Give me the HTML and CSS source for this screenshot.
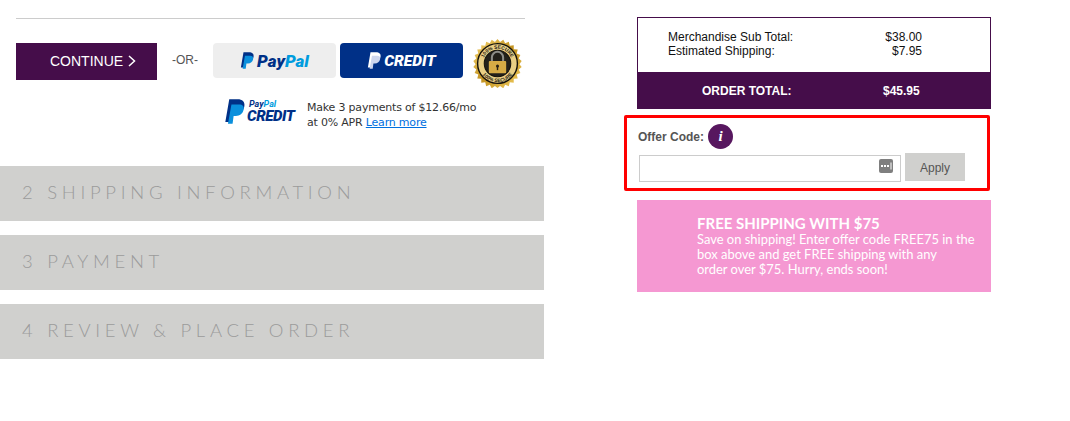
FILE: index.html
```html
<!DOCTYPE html>
<html lang="en">
<head>
<meta charset="utf-8">
<title>Checkout</title>
<link rel="stylesheet" href="styles.css">
</head>
<body>
<svg class="defs" width="0" height="0" aria-hidden="true">
  <defs>
    <symbol id="pp-back" viewBox="0 0 24 28"><path d="M6 0h9.500c5.500 0 8.500 3 7.800 7.600-.8 5.600-4.800 8.400-10 8.400H9.500L8 26H1.500z"/></symbol>
    <symbol id="pp-front" viewBox="0 0 24 28"><path d="M8.500 6h9c3.600 0 5.600 2 5 5.400-.8 5-4.500 7.600-9 7.600h-2.500L9.800 28H4.500z"/></symbol>
  </defs>
</svg>
<main class="page">
  <section class="left">
    <hr class="rule">
    <div class="actions">
      <button class="continue" type="button"><span>CONTINUE</span>
        <svg class="chevron" viewBox="0 0 8 12" width="8" height="12"><path d="M1 1l5.500 5L1 11" fill="none" stroke="#fff" stroke-width="1.500"/></svg>
      </button>
      <span class="or">-OR-</span>
      <div class="pay-stack">
        <div class="pay-row">
          <div class="pay-btn pay-btn-light">
            <svg class="pp-mark" width="14" height="17"><use href="#pp-back" class="fill-navy"/><use href="#pp-front" class="fill-sky"/></svg>
            <span class="pp-word"><span class="navy">Pay</span><span class="sky">Pal</span></span>
          </div>
          <div class="pay-btn pay-btn-dark">
            <svg class="pp-mark" width="14" height="17"><use href="#pp-back" class="fill-white"/><use href="#pp-front" class="fill-pale"/></svg>
            <span class="pp-credit">CREDIT</span>
          </div>
          <svg class="badge" viewBox="0 0 48 48" width="48" height="48">
            <defs>
              <linearGradient id="gold" x1="0" y1="0" x2="1" y2="1"><stop offset="0" stop-color="#f7d774"/><stop offset=".5" stop-color="#c2921f"/><stop offset="1" stop-color="#f3cf62"/></linearGradient>
              <path id="arc-top" d="M9.500 24a14.500 14.500 0 0 1 29 0"/>
              <path id="arc-bot" d="M5.800 24a18.200 18.200 0 0 0 36.400 0"/>
            </defs>
            <polygon fill="url(#gold)" points="24,0 26.500,3 29.700,.7 31.500,4.200 35.100,2.800 36,6.600 39.900,6.100 39.900,10 43.800,10.400 42.800,14.200 46.400,15.700 44.800,19.200 47.700,21.600 45.500,24.800 47.700,27.400 44.800,29.800 46.400,33.300 42.800,34.800 43.800,38.600 39.900,39 39.900,42.900 36,42.400 35.100,46.200 31.500,44.800 29.700,48.300 26.500,46 24,48 21.500,46 18.300,48.300 16.500,44.800 12.900,46.200 12,42.400 8.100,42.900 8.100,39 4.200,38.600 5.200,34.800 1.600,33.300 3.200,29.800 .3,27.400 2.500,24.800 .3,21.600 3.200,19.200 1.600,15.700 5.200,14.200 4.200,10.400 8.100,10 8.100,6.100 12,6.600 12.900,2.800 16.500,4.200 18.300,.7 21.500,3"/>
            <circle cx="24" cy="24" r="19.500" fill="#e9cf85" stroke="#16130c" stroke-width="1.400"/>
            <circle cx="24" cy="24" r="13" fill="#23211b" stroke="#16130c" stroke-width="1"/>
            <text class="badge-text"><textPath href="#arc-top" startOffset="50%" text-anchor="middle">100% SECURE</textPath></text>
            <text class="badge-text"><textPath href="#arc-bot" startOffset="50%" text-anchor="middle">100% SECURE</textPath></text>
            <path d="M18.500 22v-4a5.500 5.500 0 0 1 11 0v4" fill="none" stroke="#8d8d88" stroke-width="2"/>
            <rect x="15.500" y="21.500" width="17" height="12" rx="1" fill="#d6ab45"/>
            <circle cx="24" cy="26.500" r="1.500" fill="#2b2214"/><rect x="23.300" y="27" width="1.400" height="3.500" fill="#2b2214"/>
          </svg>
        </div>
        <div class="credit-row">
          <div class="credit-logo">
            <svg class="credit-mark" width="21" height="25"><use href="#pp-back" class="fill-navy"/><use href="#pp-front" class="fill-sky"/></svg>
            <div class="credit-words">
              <span class="credit-small"><span class="navy">Pay</span><span class="sky">Pal</span></span>
              <span class="credit-big">CREDIT</span>
            </div>
          </div>
          <p class="credit-copy">Make 3 payments of $12.66/mo<br>at 0% APR <a href="#">Learn more</a></p>
        </div>
      </div>
    </div>
    <div class="steps">
      <h2 class="step">2 SHIPPING INFORMATION</h2>
      <h2 class="step">3 PAYMENT</h2>
      <h2 class="step">4 REVIEW &amp; PLACE ORDER</h2>
    </div>
  </section>
  <aside class="right">
    <div class="summary">
      <div class="summary-lines">
        <div class="line"><span>Merchandise Sub Total:</span><span>$38.00</span></div>
        <div class="line"><span>Estimated Shipping:</span><span>$7.95</span></div>
      </div>
      <div class="total"><span class="total-label">ORDER TOTAL:</span><span class="total-value">$45.95</span></div>
    </div>
    <div class="offer">
      <div class="offer-head">
        <label class="offer-label" for="code">Offer Code:</label>
        <span class="info">i</span>
      </div>
      <div class="offer-form">
        <div class="field">
          <input id="code" class="field-input" type="text">
          <svg class="field-icon" viewBox="0 0 14 14" width="14" height="14"><rect width="14" height="14" rx="2" fill="#7f7f7f"/><path d="M2 6h2v2H2zM5 6h2v2H5zM8 6h2v2H8z" fill="#fff"/><path d="M12 3.500v7" stroke="#fff"/></svg>
        </div>
        <button class="apply" type="button">Apply</button>
      </div>
    </div>
    <div class="promo">
      <h3 class="promo-title">FREE SHIPPING WITH $75</h3>
      <p class="promo-text">Save on shipping! Enter offer code FREE75 in the<br>box above and get FREE shipping with any<br>order over $75. Hurry, ends soon!</p>
    </div>
  </aside>
</main>
</body>
</html>
```
FILE: styles.css
```css
* { box-sizing: border-box; }
html, body { margin: 0; padding: 0; background: #fff; overflow: hidden; }
body { height: 421px; font-family: "Liberation Sans", Arial, sans-serif; }
.defs { display: block; height: 0; }
.page { display: flex; align-items: flex-start; }

.left { width: 544px; padding-top: 18px; }
.rule { margin: 0 19px 0 16px; border: 0; border-top: 1px solid #cccccc; height: 1px; }
.actions { display: flex; align-items: flex-start; padding: 21px 0 0 16px; height: 147px; }
.continue { width: 141px; height: 37px; margin-top: 3px; padding: 0 0 2px 34px; display: flex; align-items: center; gap: 5px; background: #450d4a; color: #fff; border: 0; font: 14px "Liberation Sans", Arial, sans-serif; }
.chevron { display: block; margin-top: 1px; }
.or { margin: 13px 15px 0; font-size: 12px; line-height: 14px; color: #555; }
.pay-stack { display: flex; flex-direction: column; }
.pay-row { display: flex; align-items: flex-start; gap: 4px; }
.pay-btn { width: 123px; height: 35px; margin-top: 3px; border-radius: 4px; display: flex; align-items: center; justify-content: center; gap: 3px; }
.pay-btn-light { background: #eeeeee; }
.pay-btn-dark { background: #003087; }
.pp-word { font: italic 900 17px "Roboto", "Liberation Sans", sans-serif; }
.pp-credit { font: italic 900 15.500px "Roboto", "Liberation Sans", sans-serif; color: #fff; }
.navy { color: #003087; }
.sky { color: #009cde; }
.fill-navy { fill: #003087; }
.fill-sky { fill: #0a8fdc; }
.fill-white { fill: #fff; }
.fill-pale { fill: #cdd6ee; }
.badge { display: block; margin: -1px 0 0 6px; width: 49px; height: 49px; }
.badge-text { font: 700 4.800px "Liberation Sans", sans-serif; fill: #1d1a14; }
.credit-row { display: flex; align-items: flex-start; margin: 10px 0 0 11px; }
.credit-logo { display: flex; align-items: flex-start; width: 83px; padding-top: 1px; }
.credit-mark { display: block; margin-right: 2px; }
.credit-words { display: flex; flex-direction: column; }
.credit-small { font: italic 700 9px/10px "Roboto", sans-serif; margin-left: 2px; }
.credit-big { font: italic 900 15px/15px "Roboto", sans-serif; color: #003087; letter-spacing: -.4px; }
.credit-copy { margin: 2px 0 0; font: 11px/15px "DejaVu Sans", Verdana, sans-serif; color: #333; letter-spacing: -.2px; }
.credit-copy a { color: #0070e0; }

.steps { display: flex; flex-direction: column; gap: 14px; }
.step { margin: 0; height: 55px; padding: 0 0 0 22px; background: #d0d0ce; color: #9b9b9b; font: 300 18.500px/53px "Lato", sans-serif; letter-spacing: 4.700px; white-space: nowrap; }

.right { width: 354px; margin: 17px 0 0 93px; display: flex; flex-direction: column; }
.summary { height: 92px; border: 1px solid #450d4a; display: flex; flex-direction: column; }
.summary-lines { height: 54px; padding: 12px 68px 0 30px; font-size: 12px; line-height: 14px; color: #111; }
.line { display: flex; justify-content: space-between; }
.total { flex: 1; margin: 0 -1px -1px; background: #450d4a; color: #fff; font-weight: 700; font-size: 12px; display: flex; align-items: center; }
.total-label { margin-left: 65px; width: 181px; }
.offer { width: 366px; height: 76px; margin: 6px 0 0 -13px; border: 3px solid #f00; border-radius: 2px; padding: 6px 0 0 11px; }
.offer-head { display: flex; align-items: center; gap: 4px; }
.offer-label { font-size: 12px; font-weight: 700; color: #555; }
.info { width: 25px; height: 25px; border-radius: 50%; background: #57175f; color: #fff; display: flex; align-items: center; justify-content: center; font: italic 700 15px "Liberation Serif", serif; }
.offer-form { display: flex; align-items: flex-start; gap: 4px; margin: 4px 0 0 1px; }
.field { position: relative; width: 262px; height: 27px; margin-top: 2px; }
.field-input { display: block; width: 100%; height: 100%; padding: 0 24px 0 4px; border: 1px solid #cccccc; background: #fff; }
.field-icon { position: absolute; top: 4px; right: 8px; }
.apply { width: 60px; height: 28px; padding: 2px 0 0; border: 0; background: #d0d0ce; color: #555; font: 12px "Liberation Sans", Arial, sans-serif; }
.promo { height: 92px; margin-top: 9px; padding: 15px 0 0 60px; background: #f598d2; color: #fff; }
.promo-title { margin: 0; font: 700 15px/16px "Lato", sans-serif; }
.promo-text { margin: 1px 0 0; font: 12.950px/15px "Lato", sans-serif; white-space: nowrap; }
```
